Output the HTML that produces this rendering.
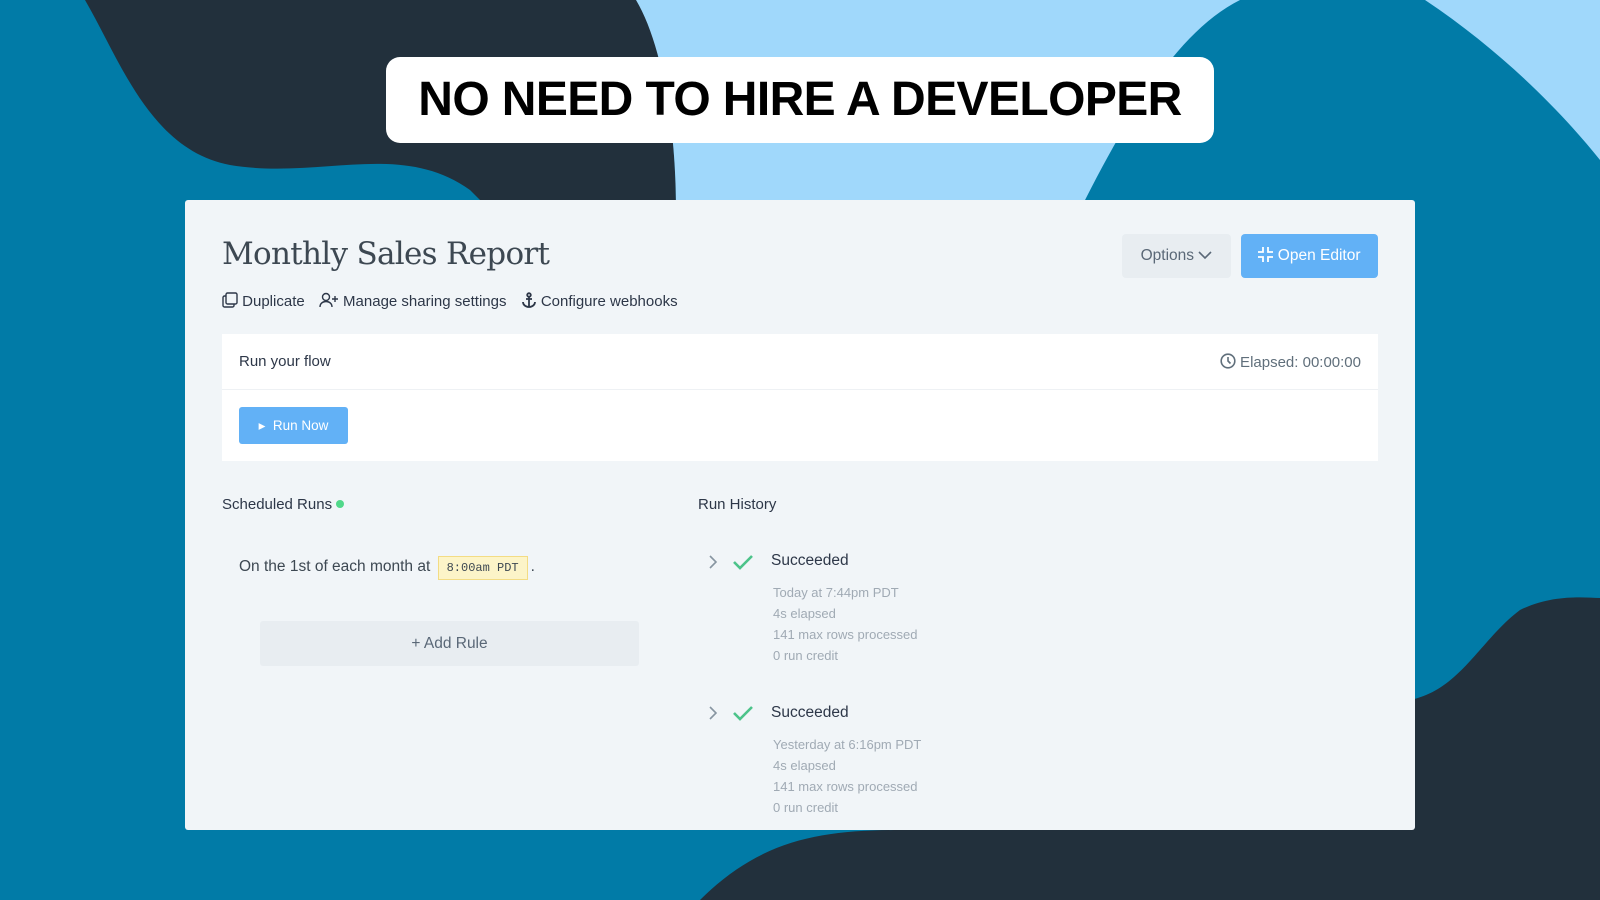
<!DOCTYPE html>
<html><head><style>
*{margin:0;padding:0;box-sizing:border-box}
body{width:1600px;height:900px;overflow:hidden;position:relative;background:#017ba7;font-family:"Liberation Sans",sans-serif;color:#2d3748}
.abs{position:absolute}
svg.i{vertical-align:-2px}
</style></head><body>
<svg class="abs" style="left:0;top:0" width="1600" height="900">
<path d="M85 0 C120 60 150 150 230 165 C320 180 400 140 470 190 L490 210 L676 210 C676 120 660 40 640 0 Z" fill="#22303c"/>
<path d="M636 0 C660 40 676 120 676 210 L1080 210 C1130 110 1180 30 1240 0 Z" fill="#a0d8fb"/>
<path d="M1425 0 C1500 50 1560 110 1600 160 L1600 0 Z" fill="#a0d8fb"/>
<path d="M700 900 C760 840 820 830 900 830 L1410 830 L1410 700 C1460 690 1480 640 1520 610 C1550 595 1580 597 1600 598 L1600 900 Z" fill="#22303c"/>
</svg>
<div class="abs" style="left:386px;top:57px;width:828px;height:86px;background:#fff;border-radius:14px;text-align:center;font-weight:bold;font-size:48px;line-height:86px;color:#000;letter-spacing:-0.6px">NO NEED TO HIRE A DEVELOPER</div>
<div class="abs" style="left:185px;top:200px;width:1230px;height:630px;background:#f1f5f8;border-radius:3px"></div>
<div class="abs" style="left:222px;top:236px;font-family:'DejaVu Serif','Liberation Serif',serif;font-size:31px;font-weight:300;color:#3d4852;letter-spacing:-0.7px">Monthly Sales Report</div>
<div class="abs" style="left:222px;top:292px;font-size:15px;color:#2d3748;white-space:nowrap">
<svg class="i" width="16" height="16" viewBox="0 0 16 16" fill="none" stroke="#2d3748" stroke-width="1.4"><rect x="4" y="1" width="11" height="11" rx="1.5"/><path d="M4 4H2.5A1.5 1.5 0 0 0 1 5.5v8A1.5 1.5 0 0 0 2.5 15h8a1.5 1.5 0 0 0 1.5-1.5V12"/></svg> Duplicate
<svg class="i" style="margin-left:10px" width="20" height="16" viewBox="0 0 20 16" fill="none" stroke="#2d3748" stroke-width="1.4"><circle cx="7" cy="5" r="3.5"/><path d="M1 15c0-3.5 2.7-5.5 6-5.5s6 2 6 5.5M16 4v6M13 7h6"/></svg> Manage sharing settings
<svg class="i" style="margin-left:10px" width="16" height="16" viewBox="0 0 16 16" fill="none" stroke="#2d3748" stroke-width="1.8"><circle cx="8" cy="3" r="1.8"/><path d="M8 5v10M5 7h6M2 10c0 3 3 5 6 5s6-2 6-5"/></svg> Configure webhooks</div>
<div class="abs" style="left:1122px;top:234px;width:109px;height:44px;background:#e8edf1;border-radius:4px;color:#5a6877;font-size:15.5px;line-height:44px;text-align:center">Options <svg width="14" height="10" viewBox="0 0 14 10" fill="none" stroke="#5a6877" stroke-width="1.6"><path d="M1 2l6 6 6-6"/></svg></div>
<div class="abs" style="left:1241px;top:234px;width:137px;height:44px;background:#62b1f6;border-radius:4px;color:#fff;font-size:15.5px;line-height:44px;text-align:center"><svg class="i" width="15" height="15" viewBox="0 0 15 15" fill="none" stroke="#fff" stroke-width="1.8"><path d="M5 0v5H0M10 0v5h5M5 15v-5H0M10 15v-5h5"/></svg> Open Editor</div>
<div class="abs" style="left:222px;top:334px;width:1156px;height:127px;background:#fff"></div>
<div class="abs" style="left:222px;top:389px;width:1156px;height:1px;background:#eef1f4"></div>
<div class="abs" style="left:239px;top:353px;font-size:15px">Run your flow</div>
<div class="abs" style="right:239px;top:353px;font-size:15px;color:#606f7b"><svg class="i" width="16" height="16" viewBox="0 0 16 16" fill="none" stroke="#606f7b" stroke-width="1.6"><circle cx="8" cy="8" r="6.8"/><path d="M8 4v4l2.5 2.5"/></svg> Elapsed: 00:00:00</div>
<div class="abs" style="left:239px;top:407px;width:109px;height:37px;background:#62b1f6;border-radius:3px;color:#fff;font-size:13.5px;line-height:37px;text-align:center">&#9656;&nbsp; Run Now</div>
<div class="abs" style="left:222px;top:496px;font-size:15px">Scheduled Runs <span style="display:inline-block;width:8px;height:8px;border-radius:50%;background:#51d88a;vertical-align:1px"></span></div>
<div class="abs" style="left:698px;top:496px;font-size:15px">Run History</div>
<div class="abs" style="left:239px;top:556px;font-size:15.5px;color:#3d4852">On the 1st of each month at <span style="display:inline-block;background:#fcf4c8;border:1px solid #f3dc84;font-family:'Liberation Mono',monospace;font-size:12px;padding:4px 8px;margin:0 3px">8:00am PDT</span>.</div>
<div class="abs" style="left:260px;top:621px;width:379px;height:45px;background:#e8edf1;border-radius:3px;color:#5a6877;font-size:15.5px;line-height:45px;text-align:center">+ Add Rule</div>
<svg class="abs" style="left:708px;top:554px" width="10" height="16" viewBox="0 0 10 16" fill="none" stroke="#8795a1" stroke-width="1.6"><path d="M2 2l6 6-6 6"/></svg>
<svg class="abs" style="left:732px;top:553px" width="22" height="18" viewBox="0 0 22 18" fill="none" stroke="#4cc38a" stroke-width="2.6"><path d="M2 9l6 6L20 3"/></svg>
<div class="abs" style="left:771px;top:552px;font-size:15.5px">Succeeded</div>
<div class="abs" style="left:773px;top:582px;font-size:13px;color:#a0aab4;line-height:21px">Today at 7:44pm PDT<br>4s elapsed<br>141 max rows processed<br>0 run credit</div>
<svg class="abs" style="left:708px;top:705px" width="10" height="16" viewBox="0 0 10 16" fill="none" stroke="#8795a1" stroke-width="1.6"><path d="M2 2l6 6-6 6"/></svg>
<svg class="abs" style="left:732px;top:704px" width="22" height="18" viewBox="0 0 22 18" fill="none" stroke="#4cc38a" stroke-width="2.6"><path d="M2 9l6 6L20 3"/></svg>
<div class="abs" style="left:771px;top:704px;font-size:15.5px">Succeeded</div>
<div class="abs" style="left:773px;top:734px;font-size:13px;color:#a0aab4;line-height:21px">Yesterday at 6:16pm PDT<br>4s elapsed<br>141 max rows processed<br>0 run credit</div>
</body></html>
